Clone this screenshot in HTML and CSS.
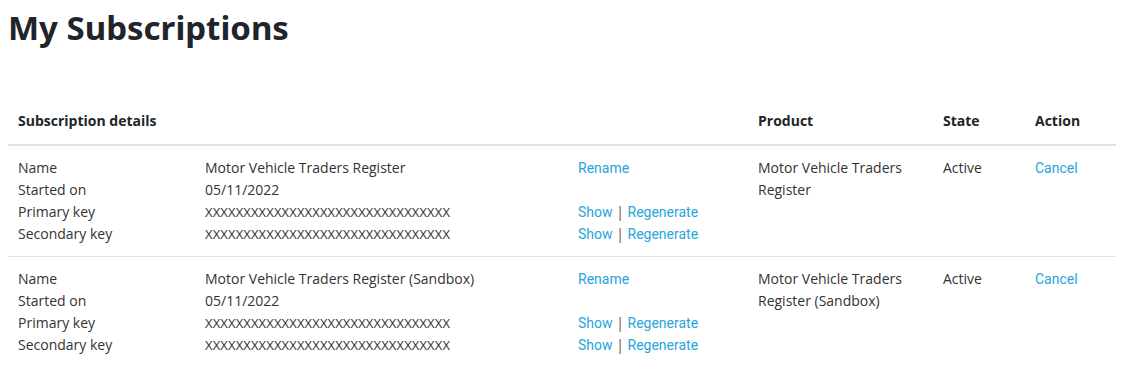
FILE: index.html
```html
<!DOCTYPE html>
<html lang="en">
<head>
  <meta charset="UTF-8">
  <meta name="viewport" content="width=device-width, initial-scale=1.0">
  <title>My Subscriptions</title>
  <link rel="stylesheet" href="styles.css">
</head>
<body>
  <h1 class="page-title">My Subscriptions</h1>

  <table class="subs">
    <thead>
      <tr>
        <th class="col-details">Subscription details</th>
        <th class="col-product">Product</th>
        <th class="col-state">State</th>
        <th class="col-action">Action</th>
      </tr>
    </thead>
    <tbody>
      <tr>
        <td>
          <div class="details">
            <span>Name</span>
            <span>Motor Vehicle Traders Register</span>
            <span><a href="#">Rename</a></span>
            <span>Started on</span>
            <span>05/11/2022</span>
            <span></span>
            <span>Primary key</span>
            <span class="key">XXXXXXXXXXXXXXXXXXXXXXXXXXXXXXXX</span>
            <span><a href="#">Show</a> <span class="sep">|</span> <a href="#">Regenerate</a></span>
            <span>Secondary key</span>
            <span class="key">XXXXXXXXXXXXXXXXXXXXXXXXXXXXXXXX</span>
            <span><a href="#">Show</a> <span class="sep">|</span> <a href="#">Regenerate</a></span>
          </div>
        </td>
        <td>Motor Vehicle Traders Register</td>
        <td>Active</td>
        <td><a href="#">Cancel</a></td>
      </tr>
      <tr>
        <td>
          <div class="details">
            <span>Name</span>
            <span>Motor Vehicle Traders Register (Sandbox)</span>
            <span><a href="#">Rename</a></span>
            <span>Started on</span>
            <span>05/11/2022</span>
            <span></span>
            <span>Primary key</span>
            <span class="key">XXXXXXXXXXXXXXXXXXXXXXXXXXXXXXXX</span>
            <span><a href="#">Show</a> <span class="sep">|</span> <a href="#">Regenerate</a></span>
            <span>Secondary key</span>
            <span class="key">XXXXXXXXXXXXXXXXXXXXXXXXXXXXXXXX</span>
            <span><a href="#">Show</a> <span class="sep">|</span> <a href="#">Regenerate</a></span>
          </div>
        </td>
        <td>Motor Vehicle Traders Register (Sandbox)</td>
        <td>Active</td>
        <td><a href="#">Cancel</a></td>
      </tr>
    </tbody>
  </table>
</body>
</html>
```

FILE: styles.css
```css
body {
  margin: 0;
  padding: 0 5px 0 8px;
  font-family: "Open Sans", sans-serif;
  font-size: 14px;
  line-height: 22px;
  color: #333;
  background: #fff;
}
.page-title {
  margin: 6px 0 0;
  height: 92px;
  font-family: "Noto Sans", sans-serif;
  font-size: 33px;
  line-height: 44px;
  font-weight: 700;
  color: #21252b;
}
.subs {
  width: 100%;
  border-collapse: collapse;
}
.subs th {
  text-align: left;
  font-weight: 700;
  color: #212529;
  padding: 12px 10px;
  border-bottom: 2px solid #dee2e6;
  vertical-align: top;
}
.subs td {
  padding: 11px 10px 11px;
  vertical-align: top;
  border-top: 1px solid #dee2e6;
}
.subs tbody tr:first-child td {
  border-top: none;
}
.col-details { width: 720px; }
.col-product { width: 165px; }
.col-state { width: 72px; }
.details {
  display: grid;
  grid-template-columns: 187px 373px 1fr;
}
.key {
  font-size: 13px;
  letter-spacing: 0.15px;
}
a {
  color: #27a5dd;
  text-decoration: none;
  font-family: "Liberation Sans Narrow", "Roboto", sans-serif;
  font-size: 14px;
}
.sep {
  color: #6b4a3a;
}
```
